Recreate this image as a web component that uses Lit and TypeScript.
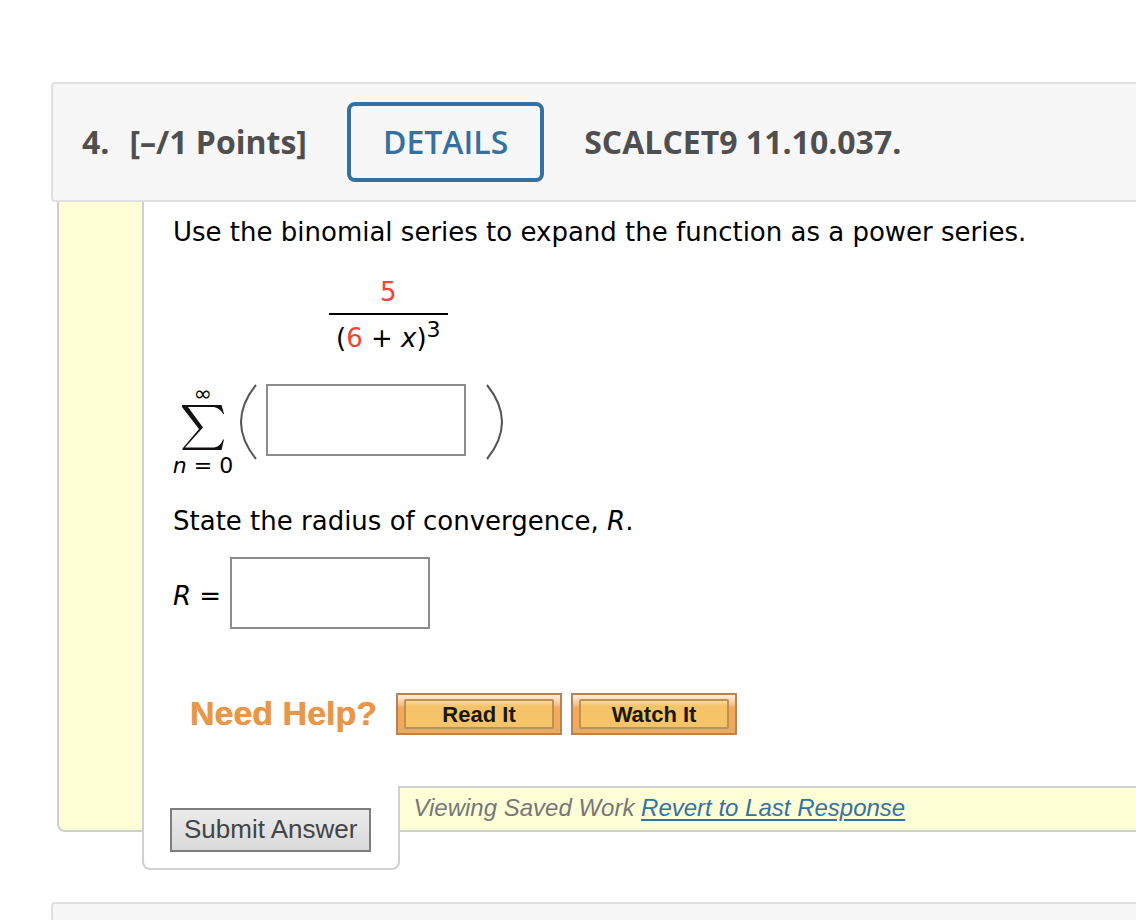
import { LitElement, html, css, svg } from "lit";
import { customElement, property } from "lit/decorators.js";

@customElement("question-header")
class QuestionHeader extends LitElement {
  @property() number = "";
  @property() points = "";
  @property() code = "";

  static styles = css`
    :host {
      display: block;
    }
    .bar {
      box-sizing: border-box;
      min-height: 120px;
      display: flex;
      align-items: center;
      padding: 0 29px;
      border: 2px solid #e0e0e0;
      border-right: 0;
      border-radius: 4px 0 0 4px;
      background: #f7f7f7;
      color: #4f4f4f;
      font: 700 32px/44px "Open Sans", sans-serif;
      white-space: nowrap;
    }
    .points {
      margin-left: 20px;
    }
    .details {
      box-sizing: border-box;
      height: 80px;
      margin: 0 40px;
      padding: 0 32px;
      border: 4px solid #3571a0;
      border-radius: 8px;
      background: transparent;
      color: #3571a0;
      font: 600 32px/44px "Open Sans", sans-serif;
    }
  `;

  render() {
    return html`
      <header class="bar">
        <span>${this.number}</span>
        <span class="points">${this.points}</span>
        ${this.code
          ? html`<button class="details" type="button">DETAILS</button>
              <span>${this.code}</span>`
          : ""}
      </header>
    `;
  }
}

const sigma = svg`
  <path fill="#111" d="M0 1H39.500L42 10H41Q38.500 4.500 32 3H6L21 23.500L3 43.500H32Q38.500 42.500 41 35.500H42L39.500 46H0.500V44.500L17 25L0 3Z"/>
`;

@customElement("app-root")
class AppRoot extends LitElement {
  static styles = css`
    :host {
      display: block;
      height: 100vh;
      overflow: hidden;
      background: #fff;
    }
    .page {
      padding: 82px 0 0 51px;
    }
    .question {
      display: grid;
      grid-template-columns: 85px 1fr;
      margin: 0 0 32px 6px;
    }
    .gutter {
      margin-bottom: 38px;
      border: 2px solid #d0d0d0;
      border-width: 0 0 2px 2px;
      border-radius: 0 0 0 8px;
      background: #feffd6;
    }
    .content {
      padding: 10px 28px 51px 29px;
      border-left: 2px solid #d0d0d0;
      color: #000;
      font: 26px/40px "DejaVu Sans", sans-serif;
    }
    p {
      margin: 0;
    }
    .fraction {
      display: inline-flex;
      flex-direction: column;
      align-items: center;
      gap: 1px;
      margin: 20px 0 0 156px;
      line-height: 40px;
    }
    .denominator {
      border-top: 2px solid #000;
      padding: 0 7px;
      line-height: 46px;
    }
    .given {
      color: #f44336;
    }
    sup {
      font-size: 22px;
      line-height: 0;
      vertical-align: 10px;
    }
    .series {
      display: flex;
      align-items: flex-start;
      margin-top: 23px;
    }
    .sum {
      display: flex;
      flex-direction: column;
      align-items: center;
      width: 60px;
      margin-right: 6px;
      font-size: 22px;
      line-height: 20px;
      white-space: nowrap;
    }
    .sum svg {
      margin-bottom: 5px;
    }
    .paren {
      fill: none;
      stroke: #555;
    }
    .answer {
      box-sizing: border-box;
      width: 200px;
      height: 72px;
      margin: 0;
      padding: 4px 8px;
      border: 2px solid #8c8c8c;
      border-radius: 0;
      background: #fff;
      font: inherit;
    }
    .series .answer {
      margin: 0 19px 0 8px;
    }
    .radius {
      margin-top: 25px;
    }
    .radius-row {
      display: flex;
      align-items: center;
      gap: 9px;
      margin-top: 16px;
    }
    .radius-row label {
      padding-top: 6px;
    }
    .help {
      display: flex;
      align-items: center;
      gap: 9px;
      margin: 64px 0 0 17px;
    }
    .help-title {
      margin-right: 10px;
      padding-bottom: 2px;
      color: #e8964a;
      font: 700 34px/40px "Liberation Sans", sans-serif;
      text-shadow: 0 0 1px #e8964a;
    }
    .help-button {
      box-sizing: border-box;
      width: 166px;
      height: 42px;
      padding: 4px 6px;
      border: 2px solid #b58450;
      background: linear-gradient(#fdf0e2, #f6c797 22%, #f2a95c 34%);
    }
    .help-label {
      display: block;
      box-sizing: border-box;
      height: 30px;
      border: 2px solid #bf9150;
      border-radius: 2px;
      background: linear-gradient(#f8d9a2, #f5c469 20%);
      color: #1c1808;
      font: 700 22px/28px "Liberation Sans", sans-serif;
    }
    .footer {
      display: flex;
      align-items: flex-start;
      font-family: "Liberation Sans", sans-serif;
    }
    .submit-tab {
      box-sizing: border-box;
      padding: 22px 27px 16px 26px;
      border: 2px solid #d0d0d0;
      border-top: 0;
      border-radius: 0 0 8px 8px;
      background: #fff;
    }
    .submit {
      display: block;
      box-sizing: border-box;
      height: 44px;
      padding: 0 12px 2px;
      border: 2px solid #7d7d7d;
      border-radius: 0;
      background: linear-gradient(#ebebeb, #d9d9d9);
      color: #444;
      font: 26px/38px "Liberation Sans", sans-serif;
      white-space: nowrap;
    }
    .status {
      flex: 1;
      box-sizing: border-box;
      height: 46px;
      margin-left: -2px;
      padding-left: 13px;
      border: 2px solid #d0d0d0;
      border-right: 0;
      background: #feffd6;
      color: #777;
      font: italic 24px/40px "Liberation Sans", sans-serif;
      white-space: nowrap;
    }
    .status a {
      color: #3571a0;
      text-decoration-thickness: 2px;
      text-underline-offset: 3px;
    }
  `;

  render() {
    return html`
      <main class="page">
        <question-header
          number="4."
          points="[–/1 Points]"
          code="SCALCET9 11.10.037."
        ></question-header>
        <section class="question">
          <div class="gutter"></div>
          <div>
            <div class="content">
              <p>Use the binomial series to expand the function as a power series.</p>
              <div class="fraction">
                <span class="given">5</span>
                <span class="denominator"
                  >(<span class="given">6</span> + <i>x</i>)<sup>3</sup></span
                >
              </div>
              <div class="series">
                <div class="sum">
                  <span>∞</span>
                  <svg width="43" height="47" viewBox="0 0 43 47" aria-hidden="true">${sigma}</svg>
                  <span><i>n</i> = 0</span>
                </div>
                <svg class="paren" width="19" height="76" viewBox="0 0 19 76" aria-hidden="true">
                  <path d="M17 1Q-13 38 17 75" stroke-width="2" />
                </svg>
                <input class="answer" type="text" aria-label="Term of the series" />
                <svg class="paren" width="19" height="76" viewBox="0 0 19 76" aria-hidden="true">
                  <path d="M2 1Q32 38 2 75" stroke-width="2" />
                </svg>
              </div>
              <p class="radius">State the radius of convergence, <i>R</i>.</p>
              <div class="radius-row">
                <label for="radius"><i>R</i> =</label>
                <input class="answer" id="radius" type="text" />
              </div>
              <div class="help">
                <span class="help-title">Need Help?</span>
                <button class="help-button" type="button">
                  <span class="help-label">Read It</span>
                </button>
                <button class="help-button" type="button">
                  <span class="help-label">Watch It</span>
                </button>
              </div>
            </div>
            <div class="footer">
              <div class="submit-tab">
                <button class="submit" type="button">Submit Answer</button>
              </div>
              <div class="status">
                Viewing Saved Work <a href="#last-response">Revert to Last Response</a>
              </div>
            </div>
          </div>
        </section>
        <question-header></question-header>
      </main>
    `;
  }
}
